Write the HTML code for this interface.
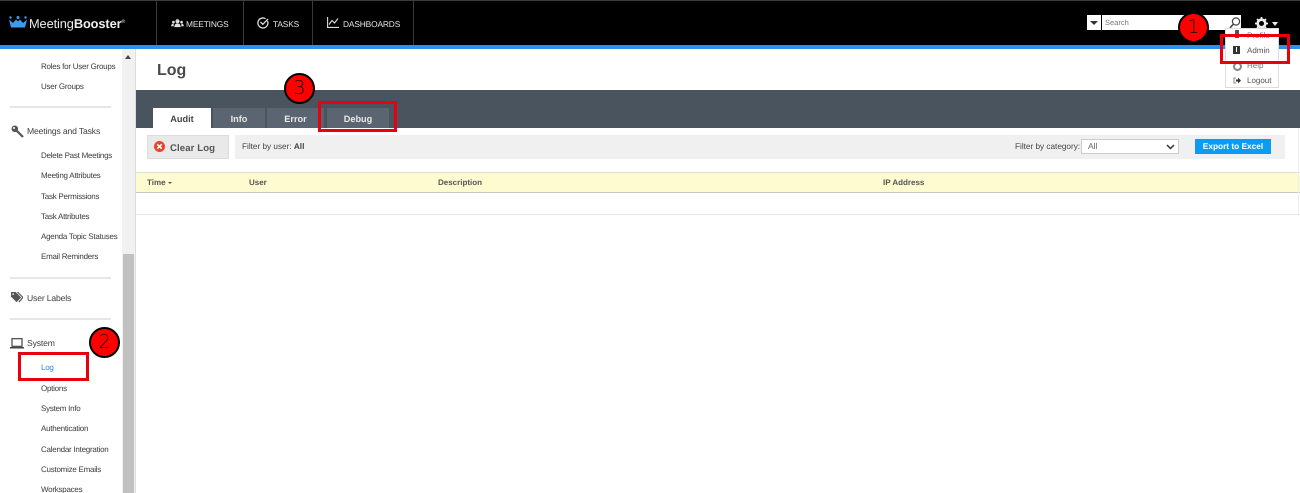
<!DOCTYPE html>
<html><head><meta charset="utf-8"><style>
html,body{margin:0;padding:0;background:#fff}
#p{position:relative;width:1300px;height:493px;overflow:hidden;background:#fff;font-family:"Liberation Sans",sans-serif;color:#444;text-rendering:geometricPrecision;filter:blur(.3px)}
#p div,#p svg{position:absolute}
.t{white-space:nowrap;line-height:12px}
.s{font-size:8px;letter-spacing:-.25px;left:41px;color:#3c3c3c;white-space:nowrap;line-height:12px;margin-top:1px}
.h{font-size:8.6px;letter-spacing:-.15px;left:27px;color:#3c3c3c;white-space:nowrap;line-height:12px}
.d{left:10px;width:101px;height:2px;background:#e6e6e6}
.n{font-size:8.4px;letter-spacing:-.15px;color:#e6e6e6;white-space:nowrap;line-height:12px;top:18px}
.v{top:1px;width:1px;height:44px;background:#3a3a3a}
.tab{top:108px;height:20px;background:#5b6571;color:#e8e8e8;font-size:9.2px;font-weight:bold;text-align:center;line-height:22px}
.c{width:31px;height:31px;border-radius:50%;background:#f00;border:2px solid #000;box-sizing:border-box;color:#200;font-size:19px;text-align:center;line-height:27px;font-family:"DejaVu Sans","Liberation Sans",sans-serif;font-weight:200}
.r{border:3px solid #e8000e;box-sizing:border-box}
.th{top:177px;font-size:8px;font-weight:bold;color:#555;white-space:nowrap;line-height:12px}
.m{font-size:8px;left:1247px;color:#555;white-space:nowrap;line-height:12px;margin-top:1px}
</style></head><body><div id="p">
<div style="left:0;top:0;width:1300px;height:45px;background:#000"></div>
<div style="left:0;top:0;width:1300px;height:1px;background:#3c3c3c"></div>
<div style="left:0;top:45px;width:1300px;height:4px;background:#2e90ee"></div>
<svg style="left:9px;top:16px" width="18" height="12" viewBox="0 0 18 12"><path d="M0 3.500L4 7 7 3.500 9 5.500 11 3.500 14 7 18 3.500 16 11.500H2z" fill="#3a9df0"/><circle cx="9" cy="1.500" r="1.500" fill="#3a9df0"/><circle cx="1.500" cy="1.500" r="1.200" fill="#3a9df0"/><circle cx="16.500" cy="1.500" r="1.200" fill="#3a9df0"/></svg>
<div class="t" style="left:29px;top:14px;font-size:12.8px;line-height:16px;color:#eee;letter-spacing:-.1px">Meeting<b>Booster</b><span style="font-size:5px;vertical-align:5px">®</span></div>
<div class="v" style="left:156px"></div><div class="v" style="left:243px"></div><div class="v" style="left:312px"></div><div class="v" style="left:413px"></div>
<svg style="left:171px;top:19px" width="13" height="9" viewBox="0 0 14 10"><circle cx="7" cy="2.500" r="2.200" fill="#ddd"/><circle cx="2.500" cy="3.500" r="1.500" fill="#ddd"/><circle cx="11.500" cy="3.500" r="1.500" fill="#ddd"/><path d="M3.500 9c0-3 1.500-4 3.500-4s3.500 1 3.500 4zM0 8c0-2 1-2.800 2.500-2.800L3 8zM14 8c0-2-1-2.800-2.500-2.800L11 8z" fill="#ddd"/></svg>
<div class="n" style="left:186px">MEETINGS</div>
<svg style="left:257px;top:17px" width="12" height="12" viewBox="0 0 12 12" fill="none" stroke="#ddd" stroke-width="1.300"><path d="M10.500 4A5 5 0 1 1 8.500 1.700"/><path d="M3.500 5l2.300 2.300L11 2"/></svg>
<div class="n" style="left:273px">TASKS</div>
<svg style="left:327px;top:17px" width="12" height="11" viewBox="0 0 12 11" fill="none" stroke="#ddd" stroke-width="1.100"><path d="M.6 0v10.400H12"/><path d="M2 7.500l3-4 2.500 2.500L11 1.500"/></svg>
<div class="n" style="left:343px">DASHBOARDS</div>

<div style="left:1087px;top:15px;width:14px;height:15px;background:#fff"></div>
<div style="left:1090px;top:21px;width:0;height:0;border:4px solid transparent;border-top:4px solid #333;border-bottom:0"></div>
<div style="left:1102px;top:15px;width:139px;height:15px;background:#fff"></div>
<div class="t" style="left:1105px;top:17px;font-size:7.5px;color:#777">Search</div>
<svg style="left:1229px;top:17px" width="12" height="12" viewBox="0 0 12 12" fill="none" stroke="#444" stroke-width="1.200"><circle cx="7" cy="4.500" r="3.600"/><path d="M4.500 7L1 10.800" stroke-width="1.600"/></svg>
<svg style="left:1255px;top:17px" width="13" height="13" viewBox="0 0 13 13"><circle cx="6.500" cy="6.500" r="3.800" fill="none" stroke="#eee" stroke-width="2.600"/><path d="M6.500 0v13M0 6.500h13M2 2l9 9M11 2l-9 9" stroke="#eee" stroke-width="1.800" stroke-dasharray="2 9 2 20"/></svg>
<div style="left:1272px;top:22px;width:0;height:0;border:3.500px solid transparent;border-top:4px solid #eee;border-bottom:0"></div>

<div style="left:1225px;top:28px;width:54px;height:60px;background:#fff;border:1px solid #ddd;box-sizing:border-box"></div>
<div class="m" style="top:29px;color:#777">Profile</div>
<div class="m" style="top:44px">Admin</div>
<div class="m" style="top:59px;color:#777">Help</div>
<div class="m" style="top:74px">Logout</div>
<div style="left:1235px;top:30px;width:4px;height:8px;background:#555"></div>
<div style="left:1233px;top:46px;width:7px;height:8px;background:#333"></div>
<div style="left:1236px;top:47px;width:1px;height:5px;background:#fff"></div>
<div style="left:1233px;top:62px;width:5px;height:5px;border:2px solid #888;border-radius:50%"></div>
<svg style="left:1233px;top:77px" width="8" height="7" viewBox="0 0 8 7"><path d="M3 1H1v5h2" fill="none" stroke="#888"/><path d="M3 2.500h2V.5L8 3.500 5 6.500v-2H3z" fill="#333"/></svg>

<!-- sidebar -->
<div style="left:122px;top:49px;width:13px;height:444px;background:#f1f1f1"></div>
<div style="left:123px;top:254px;width:11px;height:239px;background:#c1c1c1"></div>
<div style="left:125px;top:55px;width:0;height:0;border:3.500px solid transparent;border-bottom:4px solid #444;border-top:0"></div>
<div style="left:135px;top:49px;width:1px;height:444px;background:#ddd"></div>
<div class="s" style="top:60px">Roles for User Groups</div>
<div class="s" style="top:80px">User Groups</div>
<div class="d" style="top:106px"></div>
<svg style="left:11px;top:125px" width="13" height="13" viewBox="0 0 13 13"><circle cx="3.800" cy="3.800" r="3.300" fill="#555"/><path d="M5.500 5.500l6.500 6.500" stroke="#555" stroke-width="2.200"/><circle cx="3" cy="3" r="1" fill="#fff"/></svg>
<div class="h" style="top:125px">Meetings and Tasks</div>
<div class="s" style="top:149px">Delete Past Meetings</div>
<div class="s" style="top:169px">Meeting Attributes</div>
<div class="s" style="top:190px">Task Permissions</div>
<div class="s" style="top:210px">Task Attributes</div>
<div class="s" style="top:230px">Agenda Topic Statuses</div>
<div class="s" style="top:250px">Email Reminders</div>
<div class="d" style="top:277px"></div>
<svg style="left:11px;top:292px" width="12" height="11" viewBox="0 0 13 12"><path d="M0 0h5l6 6-5 5-6-6z" fill="#555"/><path d="M7 0l6 6-4.500 5" fill="none" stroke="#555" stroke-width="1.300"/><circle cx="2.300" cy="2.300" r=".9" fill="#fff"/></svg>
<div class="h" style="top:292px">User Labels</div>
<div class="d" style="top:318px"></div>
<svg style="left:10px;top:338px" width="14" height="11" viewBox="0 0 14 11"><rect x="2" y=".7" width="10" height="7.600" fill="none" stroke="#444" stroke-width="1.200"/><path d="M0 9h14v1.500H0z" fill="#444"/></svg>
<div class="h" style="top:337px">System</div>
<div class="s" style="top:361px;color:#2f86f0">Log</div>
<div class="s" style="top:382px">Options</div>
<div class="s" style="top:402px">System Info</div>
<div class="s" style="top:422px">Authentication</div>
<div class="s" style="top:443px">Calendar Integration</div>
<div class="s" style="top:463px">Customize Emails</div>
<div class="s" style="top:483px">Workspaces</div>

<!-- main -->
<div class="t" style="left:157px;top:61px;font-size:16px;line-height:20px;font-weight:bold;color:#4a4a4a">Log</div>
<div style="left:136px;top:90px;width:1164px;height:38px;background:#4a545e"></div>
<div class="tab" style="left:153px;width:58px;background:#fff;color:#444">Audit</div>
<div class="tab" style="left:213px;width:52px">Info</div>
<div class="tab" style="left:267px;width:57px">Error</div>
<div class="tab" style="left:327px;width:62px">Debug</div>

<div style="left:147px;top:135px;width:82px;height:24px;background:#e9e9e9;border:1px solid #ddd;box-sizing:border-box"></div>
<svg style="left:154px;top:141px" width="11" height="11" viewBox="0 0 11 11"><circle cx="5.500" cy="5.500" r="5.500" fill="#e8452c"/><path d="M3.300 3.300l4.400 4.400M7.700 3.300L3.300 7.700" stroke="#fff" stroke-width="1.500"/></svg>
<div class="t" style="left:170px;top:143px;font-size:9.6px;font-weight:bold;color:#555;letter-spacing:.1px">Clear Log</div>
<div style="left:235px;top:135px;width:1050px;height:24px;background:#f0f0f0"></div>
<div class="t" style="left:242px;top:141px;font-size:8.200px;color:#444">Filter by user: <b>All</b></div>
<div class="t" style="left:1015px;top:141px;font-size:8.200px;color:#444">Filter by category:</div>
<div style="left:1081px;top:139px;width:98px;height:15px;background:#fff;border:1px solid #ccc;box-sizing:border-box"></div>
<div class="t" style="left:1088px;top:140px;font-size:8.500px;color:#666">All</div>
<svg style="left:1166px;top:144px" width="9" height="6" viewBox="0 0 9 6"><path d="M1 1l3.500 3.500L8 1" fill="none" stroke="#333" stroke-width="1.500"/></svg>
<div style="left:1195px;top:139px;width:76px;height:15px;background:#0a9bf5;color:#fff;font-size:8.300px;font-weight:bold;text-align:center;line-height:15px">Export to Excel</div>

<div style="left:136px;top:172px;width:1164px;height:21px;background:#fdfbcf;border-top:1px solid #dedede;border-bottom:1px solid #c9c9c0;box-sizing:border-box"></div>
<div class="th" style="left:147px">Time</div>
<div style="left:168px;top:182px;width:0;height:0;border:2px solid transparent;border-top:2.500px solid #555;border-bottom:0"></div>
<div class="th" style="left:249px">User</div>
<div class="th" style="left:438px">Description</div>
<div class="th" style="left:883px">IP Address</div>
<div style="left:136px;top:214px;width:1164px;height:1px;background:#e6e6e6"></div>
<div style="left:1298px;top:128px;width:1px;height:87px;background:#eee"></div>

<!-- annotations -->
<div class="r" style="left:1220px;top:34px;width:70px;height:30px"></div>
<div class="r" style="left:18px;top:352px;width:71px;height:29px"></div>
<div class="r" style="left:318px;top:101px;width:79px;height:31px"></div>
<div class="c" style="left:1178px;top:12px">1</div>
<div class="c" style="left:89px;top:327px">2</div>
<div class="c" style="left:284px;top:73px">3</div>
</div></body></html>
